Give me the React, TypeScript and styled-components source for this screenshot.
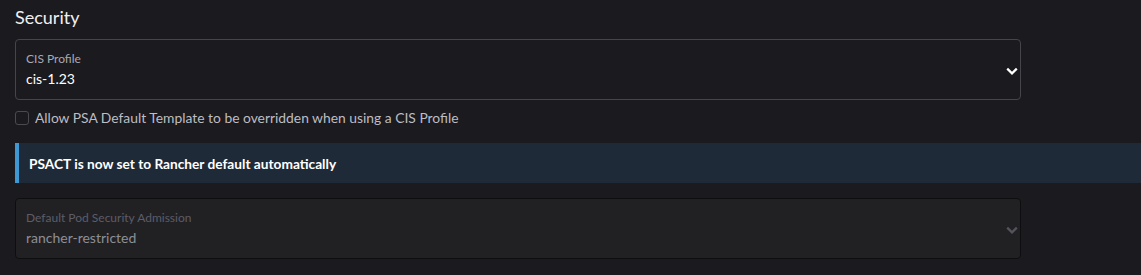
import { createGlobalStyle, styled } from "styled-components";

const GlobalStyle = createGlobalStyle`
  html, body {
    margin: 0;
    padding: 0;
    background: #1b1a1f;
  }
  body {
    font-family: Lato, "Liberation Sans", sans-serif;
    color: #e6e6e6;
  }
`;

const Page = styled.div`
  display: flex;
  flex-direction: column;
  padding: 6px 0 0 15px;
  height: 275px;
  box-sizing: border-box;
`;

const Title = styled.h3`
  margin: 0 0 10px;
  font-size: 18px;
  font-weight: 400;
  line-height: 23px;
  color: #f0f0f0;
`;

const SelectBox = styled.div<{ $disabled?: boolean }>`
  position: relative;
  display: flex;
  flex-direction: column;
  justify-content: center;
  width: 1006px;
  height: 61px;
  box-sizing: border-box;
  padding: 0 30px 0 10px;
  border: 1px solid ${(p) => (p.$disabled ? "#0e0e10" : "#45454b")};
  border-radius: 4px;
  background: ${(p) => (p.$disabled ? "#212124" : "#1b1a1f")};
`;

const SelectLabel = styled.span<{ $disabled?: boolean }>`
  font-size: 12px;
  line-height: 16px;
  color: ${(p) => (p.$disabled ? "#5d5c68" : "#a9a9b0")};
`;

const SelectValue = styled.span<{ $disabled?: boolean }>`
  font-size: 14px;
  line-height: 20px;
  margin-top: 2px;
  color: ${(p) => (p.$disabled ? "#8e8e94" : "#ffffff")};
`;

const Chevron = styled.svg`
  position: absolute;
  right: 1px;
  top: 50%;
  transform: translateY(-40%);
`;

const CheckRow = styled.label`
  display: flex;
  align-items: center;
  gap: 6px;
  margin-top: 9px;
  font-size: 13.85px;
  line-height: 18px;
  color: #bdbdc3;
`;

const CheckBox = styled.span`
  width: 12px;
  height: 12px;
  border: 1px solid #4a4a50;
  border-radius: 3px;
  background: #1b1a1f;
`;

const Banner = styled.div`
  display: flex;
  align-items: center;
  margin-top: 16px;
  height: 40px;
  padding-left: 10px;
  border-left: 4px solid #3d98d3;
  background: #1f2a38;
  font-size: 13.7px;
  font-weight: 700;
  color: #ffffff;
`;

const Spacer = styled.div`
  height: 15px;
`;

const ChevronIcon = ({ color }: { color: string }) => (
  <Chevron width="14" height="14" viewBox="0 0 14 14">
    <path
      d="M3 5 L7 9 L11 5"
      fill="none"
      stroke={color}
      strokeWidth="2.2"
      strokeLinecap="square"
    />
  </Chevron>
);

export default function App() {
  return (
    <>
      <GlobalStyle />
      <Page>
        <Title>Security</Title>
        <SelectBox>
          <SelectLabel>CIS Profile</SelectLabel>
          <SelectValue>cis-1.23</SelectValue>
          <ChevronIcon color="#ffffff" />
        </SelectBox>
        <CheckRow>
          <CheckBox />
          Allow PSA Default Template to be overridden when using a CIS Profile
        </CheckRow>
        <Banner>PSACT is now set to Rancher default automatically</Banner>
        <Spacer />
        <SelectBox $disabled>
          <SelectLabel $disabled>Default Pod Security Admission</SelectLabel>
          <SelectValue $disabled>rancher-restricted</SelectValue>
          <ChevronIcon color="#55545c" />
        </SelectBox>
      </Page>
    </>
  );
}
